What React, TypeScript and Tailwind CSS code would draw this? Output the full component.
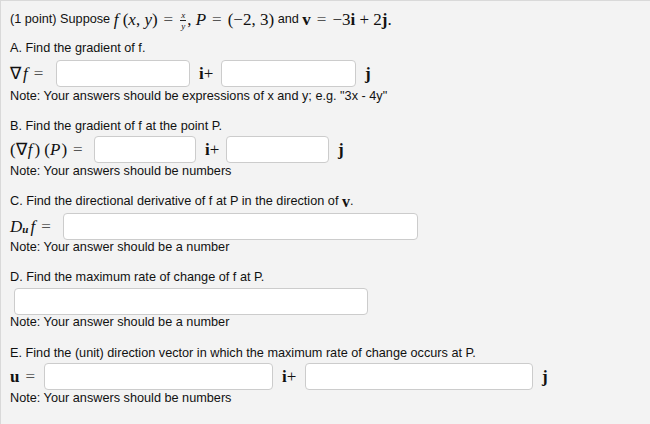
import React from "react";

const serif = "font-['Liberation_Serif','Times_New_Roman',serif]";

function Box({ w }: { w: string }) {
  return (
    <div
      className={`${w} h-[27px] shrink-0 rounded-[4px] border border-[#cccccc] bg-white`}
    />
  );
}

function IPlus({ w }: { w: string }) {
  return (
    <span className={`${w} ${serif} shrink-0 pl-[9px] text-[17px] font-bold leading-none`}>
      i<span className="font-normal">+</span>
    </span>
  );
}

function J() {
  return (
    <span className={`${serif} shrink-0 pl-[9px] text-[17px] font-bold leading-none`}>j</span>
  );
}

function Eq() {
  return <span className={`${serif} px-[6px] text-[17px] text-[#555]`}>=</span>;
}

function Label({ w, children }: { w: string; children: React.ReactNode }) {
  return (
    <span className={`${serif} ${w} flex shrink-0 items-center text-[17px] leading-none`}>
      {children}
      <Eq />
    </span>
  );
}

function Line({ children, className = "" }: { children: React.ReactNode; className?: string }) {
  return <div className={`flex h-4 items-center whitespace-nowrap ${className}`}>{children}</div>;
}

export default function App() {
  return (
    <div className="h-[424px] w-[650px] overflow-hidden border-l border-t border-[#d9d9d9] bg-[#f3f3f3] pl-[9px] pt-[11px] font-['Liberation_Sans',Arial,sans-serif] text-[12.7px] text-[#111]">
      {/* intro */}
      <Line>
        <span>(1 point) Suppose&nbsp;</span>
        <span className={`${serif} text-[17px]`}>
          <i>f</i>&nbsp;(<i>x</i>, <i>y</i>)
        </span>
        <Eq />
        <span className={`${serif} flex flex-col items-center px-[1px] text-[9px] italic leading-[10px]`}>
          <span className="border-b border-[#222] px-[1px]">x</span>
          <span>y</span>
        </span>
        <span className={`${serif} text-[17px]`}>
          ,&nbsp;<i>P</i>
        </span>
        <Eq />
        <span className={`${serif} text-[17px]`}>(−2, 3)</span>
        <span>&nbsp;and&nbsp;</span>
        <span className={`${serif} text-[17px] font-bold`}>v</span>
        <Eq />
        <span className={`${serif} text-[17px]`}>
          −3<b>i</b> + 2<b>j</b>.
        </span>
      </Line>

      {/* A */}
      <Line className="mt-[13px]">A. Find the gradient of f.</Line>
      <div className="mt-[3px] flex items-center">
        <Label w="w-[46px]">
          ∇<i className="ml-[2px]">f</i>
        </Label>
        <Box w="w-[134px]" />
        <IPlus w="w-[31px]" />
        <Box w="w-[135px]" />
        <J />
      </div>
      <Line className="mt-[2px]">
        Note: Your answers should be expressions of x and y; e.g. "3x - 4y"
      </Line>

      {/* B */}
      <Line className="mt-[14px]">B. Find the gradient of f at the point P.</Line>
      <div className="mt-[1px] flex items-center">
        <Label w="w-[84px]">
          (∇<i className="ml-[1px] mr-[2px]">f</i>)&nbsp;(<i className="mr-[1px]">P</i>)
        </Label>
        <Box w="w-[102px]" />
        <IPlus w="w-[30px]" />
        <Box w="w-[103px]" />
        <J />
      </div>
      <Line className="mt-[1px]">Note: Your answers should be numbers</Line>

      {/* C */}
      <Line className="mt-[14px]">
        C. Find the directional derivative of f at P in the direction of&nbsp;
        <b className={`${serif} text-[16px]`}>v</b>.
      </Line>
      <div className="mt-[3px] flex items-center">
        <Label w="w-[53px]">
          <i>D</i>
          <i className="mr-[2px] mt-[6px] text-[11px] font-bold">u</i>
          <i>f</i>
        </Label>
        <Box w="w-[355px]" />
      </div>
      <Line>Note: Your answer should be a number</Line>

      {/* D */}
      <Line className="mt-[14px]">D. Find the maximum rate of change of f at P.</Line>
      <div className="mt-[2px] flex items-center pl-[4px]">
        <Box w="w-[354px]" />
      </div>
      <Line>Note: Your answer should be a number</Line>

      {/* E */}
      <Line className="mt-[15px]">
        E. Find the (unit) direction vector in which the maximum rate of change occurs at P.
      </Line>
      <div className="mt-[1px] flex items-center">
        <Label w="w-[34px]">
          <b>u</b>
        </Label>
        <Box w="w-[229px]" />
        <IPlus w="w-[32px]" />
        <Box w="w-[228px]" />
        <J />
      </div>
      <Line className="mt-[1px]">Note: Your answers should be numbers</Line>
    </div>
  );
}
